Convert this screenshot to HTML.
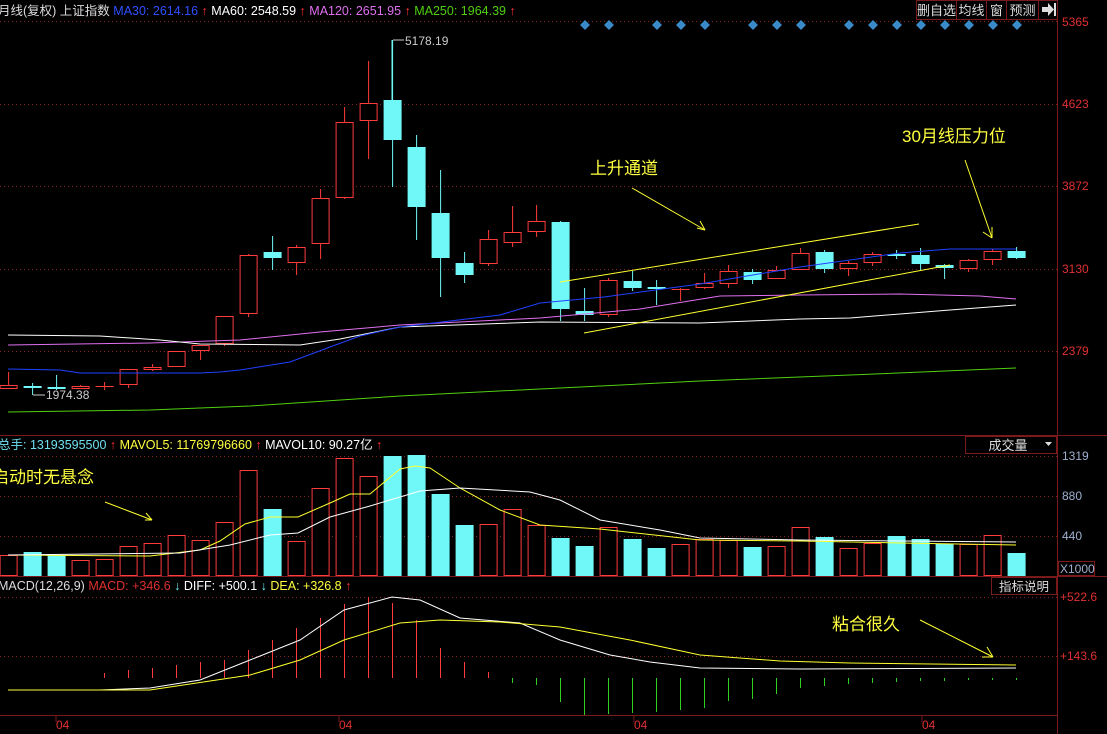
<!DOCTYPE html>
<html><head><meta charset="utf-8">
<style>
html,body{margin:0;padding:0;background:#000;overflow:hidden}
body{width:1107px;height:734px;position:relative;font-family:"Liberation Sans","Noto Sans CJK SC",sans-serif}
svg{position:absolute;left:0;top:0}
text{font-family:"Liberation Sans","Noto Sans CJK SC",sans-serif}
</style></head><body>
<svg id="s" width="1107" height="734" xmlns="http://www.w3.org/2000/svg"></svg>
<script>
var s=document.getElementById('s'),h='';
var R='#ff3b3b',C='#70f8f8',G='#7a1a1a';
function L(x1,y1,x2,y2,c,w,d){h+='<line x1="'+x1+'" y1="'+y1+'" x2="'+x2+'" y2="'+y2+'" stroke="'+c+'" stroke-width="'+(w||1)+'"'+(d?' stroke-dasharray="'+d+'"':'')+'/>';}
function P(pts,c,w){h+='<polyline fill="none" stroke="'+c+'" stroke-width="'+(w||1)+'" points="'+pts.map(function(p){return p.join(',')}).join(' ')+'"/>';}
function T(x,y,t,c,sz,a){h+='<text x="'+x+'" y="'+y+'" fill="'+c+'" font-size="'+(sz||13)+'"'+(a?' text-anchor="'+a+'"':'')+'>'+t+'</text>';}
function B(x,y,w,hh,st,f){h+='<rect x="'+x+'" y="'+y+'" width="'+w+'" height="'+hh+'" fill="'+(f||'none')+'" stroke="'+(st||'none')+'"/>';}
[21,104,186,269,351,456,496,536,597,656].forEach(function(y){L(0,y+.5,1057,y+.5,'#8a2020',1,'1,3');});
L(0,435.5,1107,435.5,G);L(0,576.5,1107,576.5,G);L(0,715.5,1057,715.5,G);L(1057.5,0,1057.5,734,G);
var cd=[['r',372,385,389,389],['c',383,386,388,395],['c',375,387,389,390],['r',385,386,389,389],['r',382,386,386,390],['r',369,369,385,388],['r',364,367,370,371],['r',351,351,367,367],['r',345,345,351,360],['r',316,316,344,346],['r',254,255,314,317],['c',236,252,258,270],['r',245,247,263,275],['r',189,198,244,259],['r',107,122,198,199],['r',61,103,121,159],['c',40,100,140,187],['c',135,147,207,240],['c',170,213,258,297],['c',252,263,275,283],['r',230,239,264,266],['r',206,232,243,247],['r',205,221,232,237],['c',221,222,309,321],['c',288,311,315,321],['r',278,280,315,317],['c',271,281,288,291],['c',280,287,289,305],['r',288,289,289,301],['r',273,283,288,289],['r',265,271,284,288],['c',269,272,280,284],['r',266,270,279,279],['r',248,253,270,270],['c',250,252,269,273],['r',261,263,269,276],['r',252,254,263,266],['c',250,254,256,259],['c',248,255,264,270],['c',264,265,268,279],['r',259,260,269,272],['r',249,251,260,265],['c',247,251,258,259]];
var vol=[555,552,555,560,559,546,543,535,540,522,470,509,541,488,458,476,456,455,494,525,524,509,525,538,546,527,539,548,544,539,540,547,546,527,537,548,543,536,539,544,544,535,553];
cd.forEach(function(c,i){var x=8.6+24*i,col=c[0]=='r'?R:C;
 L(x,c[1],x,c[4],col);
 var bh=Math.max(c[3]-c[2],1);
 if(c[0]=='r'){if(bh<3)L(x-9,c[2]+.5,x+9,c[2]+.5,R,bh<2?1:3);else B(x-8.5,c[2]+.5,17,bh-1,R,'#000');}
 else B(x-9,c[2],18,bh,null,C);
 var vt=vol[i];
 if(c[0]=='r')B(x-8.5,vt+.5,17,575-vt,R,'#000');else B(x-9,vt,18,576-vt,null,C);
});
P([[8,345],[150,343],[240,340],[320,332],[400,325],[540,318],[640,309],[720,296],[800,295],[900,294],[980,296],[1016,299]],'#e070f0');
P([[8,335],[100,336],[160,340],[200,344],[300,345],[340,339],[400,327],[540,322],[700,323],[800,319],[850,318],[950,310],[1016,305]],'#fff');
P([[8,369],[60,370],[80,373],[200,373],[220,372],[240,370],[290,362],[330,347],[360,336],[400,327],[450,321],[500,315],[540,303],[604,297],[700,284],[800,267],[900,253],[950,249],[1016,249]],'#2040ff');
P([[8,412],[150,410],[250,406],[400,396],[540,389],[700,381],[850,375],[1016,368]],'#50d010');
L(560,282,919,224,'#ffff30');L(584,333,950,265,'#ffff30');
L(632,188,705,230,'#ffff30');L(697,228,705,230,'#ffff30');L(700,221,705,230,'#ffff30');
L(965,160,992,238,'#ffff30');L(983,232,992,238,'#ffff30');L(992,227,992,238,'#ffff30');
T(590,174,'上升通道','#ffff40',17);T(902,142,'30月线压力位','#ffff40',17);
L(392,40,392,100,C);L(393,40,404,40,'#ccc');T(405,45,'5178.19','#ccc',12);
L(33,395,45,395,'#ccc');T(46,399,'1974.38','#ccc',12);
P([[8,555],[150,556],[200,550],[220,541],[245,524],[270,517],[298,517],[330,503],[350,494],[370,494],[400,469],[415,466],[430,468],[460,488],[500,510],[540,525],[600,529],[700,540],[800,541],[900,543],[1016,545]],'#ffff30');
P([[8,555],[180,553],[230,545],[270,535],[298,533],[330,517],[370,506],[420,491],[460,488],[530,492],[560,500],[600,520],[660,530],[700,538],[800,540],[1016,542]],'#fff');
T(-8,483,'启动时无悬念','#ffff40',17,null);
L(105,502,152,520,'#ffff30');L(145,520,152,520,'#ffff30');L(146,513,152,520,'#ffff30');
var mb=[[104,673],[128,670],[152,668],[176,665],[200,662],[224,660],[248,650],[272,640],[296,628],[320,618],[344,604],[368,597],[392,603],[416,620],[440,648],[464,662],[488,672],[512,683],[536,685],[560,702],[584,715],[608,714],[632,713],[656,712],[680,710],[704,708],[728,701],[752,699],[776,694],[800,688],[824,686],[848,684],[872,683],[896,682],[920,681],[944,681],[968,680],[992,680],[1016,680]];
mb.forEach(function(b){var x=b[0]+.5;L(x,678,x,b[1],b[1]<678?R:'#30d020');});
P([[8,690],[100,690],[150,688],[200,680],[250,660],[300,640],[344,610],[392,597],[420,600],[460,618],[520,623],[560,640],[610,655],[650,662],[700,668],[800,669],[1016,668]],'#fff');
P([[8,690],[150,690],[250,675],[300,660],[344,640],[400,623],[440,620],[500,622],[560,627],[630,640],[700,655],[780,661],[850,663],[1016,665]],'#ffff30');
T(832,630,'粘合很久','#ffff40',17);
L(920,620,993,657,'#ffff30');L(982,657,993,657,'#ffff30');L(987,647,993,657,'#ffff30');
[62,345,640,928].forEach(function(x){L(x-6,716,x-6,722,G);T(x-6,729,'04','#e03030',12);});
[[5365,26],[4623,108],[3872,190],[3130,273],[2379,355]].forEach(function(a){T(1062,a[1],a[0],'#e03030',12);});
[[1319,460],[880,500],[440,540]].forEach(function(a){T(1062,a[1],a[0],'#a0b0d0',12);});
B(1058.5,561.5,36,14,G);T(1060,573,'X1000','#a0b0d0',12);
T(1060,601,'+522.6','#e03030',12);T(1060,660,'+143.6','#e03030',12);
[585,609,657,681,705,753,777,801,849,873,897,921,945,969,993,1017].forEach(function(x){h+='<rect x="'+(x-3.5)+'" y="21.5" width="7" height="7" fill="#3a8cc8" transform="rotate(45 '+x+' 25)"/>';});
function HT(t,c){h+='<tspan fill="'+c+'">'+t+'</tspan>';}
h+='<text x="-2" y="15" font-size="12.5">';HT('月线(复权)  上证指数 ','#ddd');HT(' MA30: 2614.16','#3050ff');HT(' ↑ ','#ff3030');HT(' MA60: 2548.59','#fff');HT(' ↑ ','#ff3030');HT(' MA120: 2651.95','#e070f0');HT(' ↑ ','#ff3030');HT(' MA250: 1964.39','#50d010');HT(' ↑','#ff3030');h+='</text>';
h+='<text x="-2" y="449" font-size="12.5">';HT('总手: 13193595500','#70e0f0');HT(' ↑ ','#ff3030');HT(' MAVOL5: 11769796660','#ffff40');HT(' ↑ ','#ff3030');HT(' MAVOL10: 90.27亿','#fff');HT(' ↑','#ff3030');h+='</text>';
h+='<text x="-2" y="590" font-size="12.5">';HT('MACD(12,26,9)','#ddd');HT(' MACD: +346.6','#e03030');HT(' ↓ ','#70f0f0');HT(' DIFF: +500.1','#fff');HT(' ↓ ','#70f0f0');HT(' DEA: +326.8','#ffff40');HT(' ↑','#ff3030');h+='</text>';
[[916,40,'删自选'],[956,30,'均线'],[986,20,'窗'],[1006,32,'预测']].forEach(function(b){B(b[0]+.5,.5,b[1],19,G);T(b[0]+b[1]/2+.5,15,b[2],'#ddd',13,'middle');});
B(1038.5,.5,19,19,G);h+='<path d="M1042 7h6v-4l6 6.5-6 6.5v-4h-6z" fill="#ddd"/><rect x="1054" y="3" width="2" height="13" fill="#ddd"/>';
B(965.5,436.5,91,17,G);T(1008,450,'成交量','#ddd',13,'middle');h+='<path d="M1045 442h7l-3.5 4z" fill="#ddd"/>';
B(991.5,577.5,65,17,G);T(1024,591,'指标说明','#ddd',12.5,'middle');
s.innerHTML=h;
</script>
</body></html>
